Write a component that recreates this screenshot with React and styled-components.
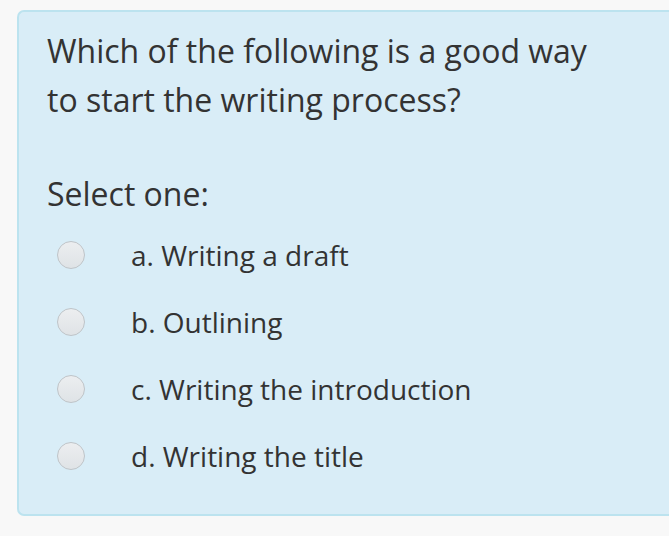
import React from 'react';
import styled, { createGlobalStyle } from 'styled-components';

const GlobalStyle = createGlobalStyle`
  html, body {
    margin: 0;
    padding: 0;
    background: #f8f8f8;
    font-family: 'Open Sans', sans-serif;
    overflow: hidden;
  }
`;

const Page = styled.div`
  width: 669px;
  height: 536px;
  padding: 10px 0 0 17px;
  box-sizing: border-box;
`;

const Panel = styled.div`
  width: 680px;
  height: 506px;
  box-sizing: border-box;
  background: #d9edf7;
  border: 2px solid #bce3ef;
  border-right: none;
  border-radius: 7px 0 0 7px;
  padding: 14px 0 0 28px;
  color: #333;
`;

const Question = styled.div`
  font-size: 32px;
  line-height: 49px;
`;

const Prompt = styled.div`
  margin-top: 46px;
  font-size: 32px;
  line-height: 48px;
`;

const Options = styled.div`
  display: flex;
  flex-direction: column;
  margin-top: 3px;
`;

const Option = styled.label`
  display: flex;
  align-items: center;
  height: 67px;
  font-size: 28px;
`;

const Radio = styled.span`
  width: 28px;
  height: 28px;
  box-sizing: border-box;
  border-radius: 50%;
  margin-left: 10px;
  margin-right: 46px;
  background: linear-gradient(#eceef0, #dfe3e6);
  border: 1px solid #bfc4c8;
  flex-shrink: 0;
`;

const options = [
  'a. Writing a draft',
  'b. Outlining',
  'c. Writing the introduction',
  'd. Writing the title',
];

export default function App() {
  return (
    <>
      <GlobalStyle />
      <Page>
        <Panel>
          <Question>
            Which of the following is a good way
            <br />
            to start the writing process?
          </Question>
          <Prompt>Select one:</Prompt>
          <Options>
            {options.map((o) => (
              <Option key={o}>
                <Radio />
                {o}
              </Option>
            ))}
          </Options>
        </Panel>
      </Page>
    </>
  );
}
